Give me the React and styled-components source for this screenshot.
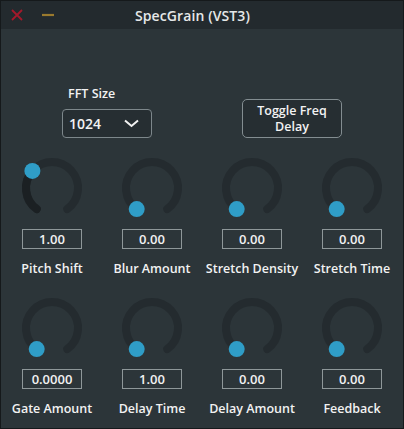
import React from 'react'
import styled, { createGlobalStyle } from 'styled-components'

const GlobalStyle = createGlobalStyle`
  html, body {
    margin: 0;
    padding: 0;
    background: #2c3539;
  }
  * { box-sizing: border-box; }
`;

const Window = styled.div`
  width: 404px;
  height: 429px;
  display: flex;
  flex-direction: column;
  background: #2c3539;
  border: 1px solid #15191b;
  font-family: "Open Sans", "DejaVu Sans", sans-serif;
  color: #f2f2f2;
  overflow: hidden;
`;

const TitleBar = styled.div`
  height: 28px;
  flex: none;
  display: flex;
  align-items: center;
  background: #232a2e;
`;

const WinButtons = styled.div`
  display: flex;
  align-items: center;
  gap: 19px;
  padding-left: 10px;
`;

const Title = styled.div`
  flex: 1;
  text-align: center;
  margin-right: 72px;
  font-size: 14px;
  font-weight: 600;
  color: #e6e8e8;
  letter-spacing: 0.1px;
`;

const Body = styled.div`
  flex: 1;
  display: flex;
  flex-direction: column;
`;

const TopRow = styled.div`
  display: flex;
  align-items: flex-end;
  padding: 57px 0 0 61px;
`;

const FieldGroup = styled.div`
  display: flex;
  flex-direction: column;
`;

const FieldLabel = styled.div`
  font-size: 12.5px;
  font-weight: 600;
  line-height: 16px;
  margin: 0 0 7px 6px;
`;

const Combo = styled.div`
  width: 90px;
  height: 29px;
  display: flex;
  align-items: center;
  justify-content: space-between;
  padding: 0 12px 0 6px;
  border: 1px solid #7d878b;
  border-radius: 4px;
  background: #262e32;
  font-size: 14px;
  font-weight: 600;
`;

const ToggleButton = styled.button`
  width: 100px;
  height: 39px;
  margin-left: 90px;
  padding: 0;
  border: 1px solid #838d91;
  border-radius: 5px;
  background: #262e32;
  color: #f2f2f2;
  font-family: inherit;
  font-size: 12.5px;
  font-weight: 600;
  line-height: 16px;
`;

const KnobGrid = styled.div`
  display: grid;
  grid-template-columns: repeat(4, 100px);
  grid-auto-rows: 140px;
  padding-left: 1px;
  margin-top: 18px;
`;

const KnobCell = styled.div`
  display: flex;
  flex-direction: column;
  align-items: center;
`;

const ValueBox = styled.div`
  width: 60px;
  height: 20px;
  margin-top: 9px;
  border: 1px solid #8e9799;
  display: flex;
  align-items: center;
  justify-content: center;
  font-size: 13px;
  font-weight: 600;
`;

const KnobLabel = styled.div`
  margin-top: 12px;
  font-size: 12.5px;
  font-weight: 600;
  line-height: 16px;
  white-space: nowrap;
`;

const START = 216
const END = 504

const polar = (deg, r) => {
  const a = (deg * Math.PI) / 180
  return [32 + r * Math.sin(a), 32 - r * Math.cos(a)]
}

const arc = (from, to, r) => {
  const [x1, y1] = polar(from, r)
  const [x2, y2] = polar(to, r)
  const large = to - from > 180 ? 1 : 0
  return `M ${x1} ${y1} A ${r} ${r} 0 ${large} 1 ${x2} ${y2}`
}

const Knob = ({ pos }) => {
  const angle = START + pos * (END - START)
  const [tx, ty] = polar(angle, 26)
  return (
    <svg width="64" height="64" viewBox="0 0 64 64">
      <path d={arc(START, END, 26)} stroke="#242b2f" strokeWidth="8" fill="none" strokeLinecap="round" />
      {pos > 0 && (
        <path d={arc(START, angle, 26)} stroke="#1b2023" strokeWidth="8" fill="none" strokeLinecap="round" />
      )}
      <circle cx={tx} cy={ty} r="8" fill="#2f9dc7" />
    </svg>
  )
}

const knobs = [
  { label: 'Pitch Shift', value: '1.00', pos: 0.33 },
  { label: 'Blur Amount', value: '0.00', pos: 0 },
  { label: 'Stretch Density', value: '0.00', pos: 0 },
  { label: 'Stretch Time', value: '0.00', pos: 0 },
  { label: 'Gate Amount', value: '0.0000', pos: 0 },
  { label: 'Delay Time', value: '1.00', pos: 0 },
  { label: 'Delay Amount', value: '0.00', pos: 0 },
  { label: 'Feedback', value: '0.00', pos: 0 },
]

const App = () => {
  return (
    <>
      <GlobalStyle />
      <Window>
        <TitleBar>
          <WinButtons>
            <svg width="12" height="12" viewBox="0 0 12 12">
              <path d="M1 1 L11 11 M11 1 L1 11" stroke="#a3192b" strokeWidth="1.8" />
            </svg>
            <svg width="12" height="12" viewBox="0 0 12 12">
              <path d="M0 6 H12" stroke="#9a7a2e" strokeWidth="2.2" />
            </svg>
          </WinButtons>
          <Title>SpecGrain (VST3)</Title>
        </TitleBar>
        <Body>
          <TopRow>
            <FieldGroup>
              <FieldLabel>FFT Size</FieldLabel>
              <Combo>
                <span>1024</span>
                <svg width="15" height="9" viewBox="0 0 15 9">
                  <path d="M1 1.5 L7.5 7 L14 1.5" stroke="#f2f2f2" strokeWidth="2" fill="none" />
                </svg>
              </Combo>
            </FieldGroup>
            <ToggleButton>Toggle Freq<br />Delay</ToggleButton>
          </TopRow>
          <KnobGrid>
            {knobs.map((k) => (
              <KnobCell key={k.label}>
                <Knob pos={k.pos} />
                <ValueBox>{k.value}</ValueBox>
                <KnobLabel>{k.label}</KnobLabel>
              </KnobCell>
            ))}
          </KnobGrid>
        </Body>
      </Window>
    </>
  )
}

export default App
